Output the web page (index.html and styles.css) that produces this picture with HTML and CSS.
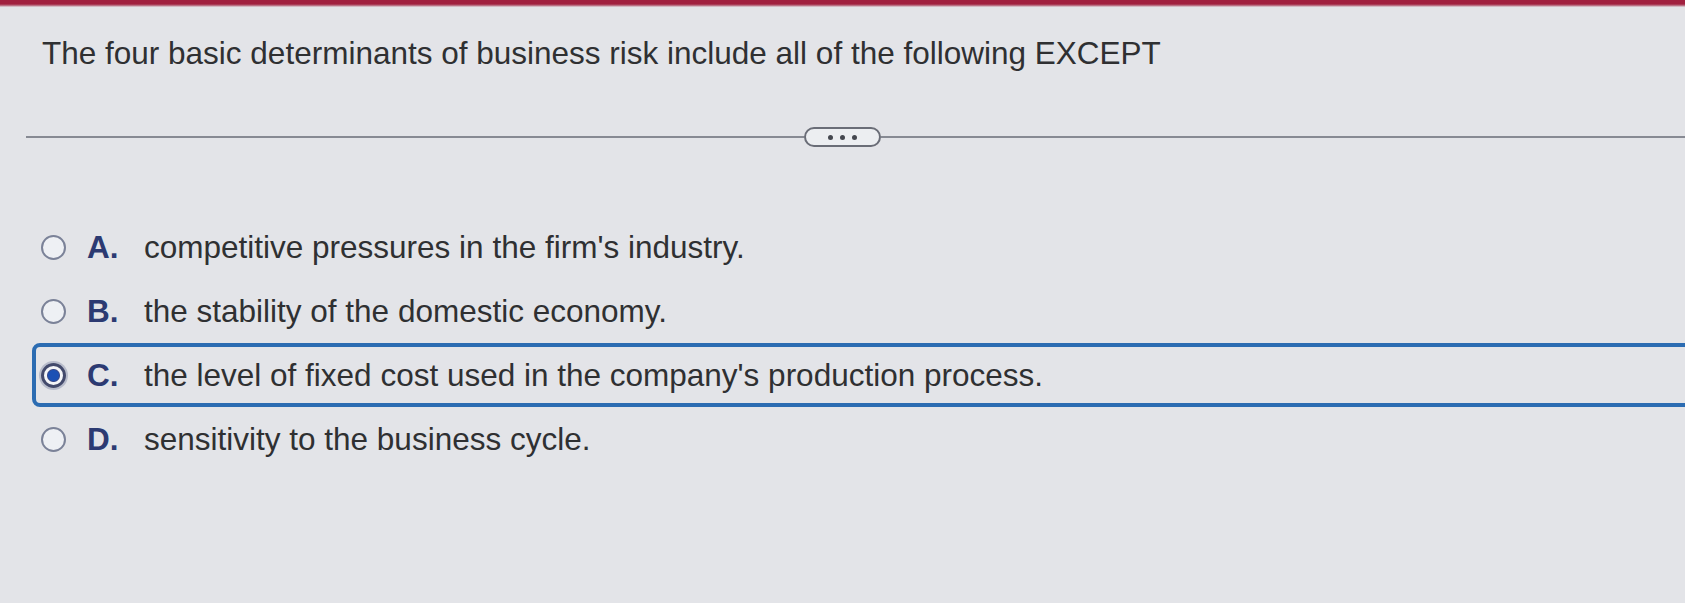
FILE: index.html
```html
<!DOCTYPE html>
<html lang="en">
<head>
<meta charset="utf-8">
<title>Question</title>
<link rel="stylesheet" href="styles.css">
</head>
<body>
<div class="topbar"></div>
<main class="page">
  <p class="question">The four basic determinants of business risk include all of the following EXCEPT</p>
  <div class="divider">
    <span class="rule rule-left"></span>
    <span class="pill"><i></i><i></i><i></i></span>
    <span class="rule"></span>
  </div>
  <ul class="options">
    <li class="option"><span class="radio"></span><span class="letter">A.</span><span class="text">competitive pressures in the firm's industry.</span></li>
    <li class="option"><span class="radio"></span><span class="letter">B.</span><span class="text">the stability of the domestic economy.</span></li>
    <li class="option selected"><span class="radio"></span><span class="letter">C.</span><span class="text">the level of fixed cost used in the company's production process.</span></li>
    <li class="option"><span class="radio"></span><span class="letter">D.</span><span class="text">sensitivity to the business cycle.</span></li>
  </ul>
</main>
</body>
</html>
```

FILE: styles.css
```css
html, body {
  margin: 0;
  padding: 0;
}
body {
  background: #e3e4e8;
  font-family: "Liberation Sans", Arial, sans-serif;
  color: #2f3032;
  overflow: hidden;
  height: 603px;
}
.topbar {
  height: 7px;
  background: linear-gradient(to bottom, #a1203f 0, #a1203f 4px, #c48a9a 6px, #e3e4e8 7px);
}
.page {
  display: flex;
  flex-direction: column;
}
.question {
  margin: 27px 0 0 42px;
  font-size: 31.5px;
  line-height: 38px;
  color: #2f3032;
}
.divider {
  margin-top: 55px;
  display: grid;
  grid-template-columns: 1fr auto 1fr;
  align-items: center;
  height: 20px;
}
.rule {
  height: 2px;
  background: #878a93;
}
.rule-left {
  margin-left: 26px;
}
.pill {
  width: 73px;
  height: 16px;
  border: 2px solid #6a6d77;
  border-radius: 10px;
  background: #eceef1;
  display: flex;
  align-items: center;
  justify-content: center;
  gap: 7px;
}
.pill i {
  width: 5px;
  height: 5px;
  border-radius: 50%;
  background: #44474f;
}
.options {
  list-style: none;
  margin: 68px -20px 0 32px;
  padding: 0;
  display: flex;
  flex-direction: column;
}
.option {
  height: 56px;
  border: 4px solid transparent;
  border-radius: 8px;
  padding-left: 4px;
  display: flex;
  align-items: center;
  font-size: 31.5px;
}
.option.selected {
  border-color: #2c6cb2;
}
.radio {
  width: 21px;
  height: 21px;
  border: 2px solid #7b8298;
  border-radius: 50%;
  background: #eef0f4;
  flex: none;
  margin-left: 1px;
}
.selected .radio {
  width: 19px;
  height: 19px;
  border: 3px solid #434a6c;
  background: radial-gradient(circle, #1b50b4 0, #1b50b4 5px, #3a4a8a 6px, #f4f5f8 7px);
  box-shadow: 0 0 0 2px #b8bccb;
}
.letter {
  font-weight: bold;
  color: #2c3a72;
  width: 57px;
  margin-left: 21px;
  flex: none;
}
.text {
  color: #2f3032;
  white-space: nowrap;
}
```
